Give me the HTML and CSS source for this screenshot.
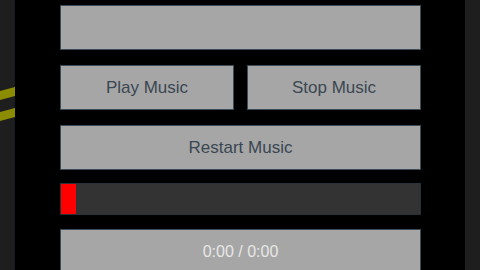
FILE: index.html
```html
<!DOCTYPE html>
<html>
  <head>
    <title>Music Player</title>
    <meta charset="UTF-8">
    <link rel="stylesheet" href="styles.css">
  </head>
  <body>
    <div class="page">
      <div class="side side-left">
        <svg width="15" height="270" viewBox="0 0 15 270">
          <polygon points="0,91 15,87 15,96 0,100" fill="#8c8c00"/>
          <polygon points="0,112 15,108 15,117 0,121" fill="#8c8c00"/>
        </svg>
      </div>
      <div class="player">
        <div class="box title-box"></div>
        <div class="row">
          <button class="box btn">Play Music</button>
          <button class="box btn">Stop Music</button>
        </div>
        <button class="box btn">Restart Music</button>
        <div class="progress">
          <div class="progress-fill" style="width: 15px"></div>
        </div>
        <div class="box time">0:00 / 0:00</div>
      </div>
      <div class="side side-right"></div>
    </div>
  </body>
</html>
```

FILE: styles.css
```css
/* Page layout */
body {
  margin: 0;
  background-color: #000;
  font-family: "Liberation Sans", Arial, sans-serif;
}

.page {
  display: flex;
  height: 270px;
  overflow: hidden;
}

.side {
  width: 15px;
  flex: none;
  background-color: #1e1e1e;
}

.side-left {
  border-right: 1px solid #161b20;
  box-sizing: border-box;
}

.side-left svg {
  display: block;
}

/* Player column */
.player {
  flex: 1;
  display: flex;
  flex-direction: column;
  padding: 5px 44px 0 45px;
}

.box {
  height: 45px;
  flex: none;
  box-sizing: border-box;
  border: 1px solid #3b4b57;
  background-color: #a6a6a6;
  margin-bottom: 15px;
}

.btn {
  display: block;
  width: 100%;
  padding: 0;
  font-family: "Liberation Sans", Arial, sans-serif;
  font-size: 17px;
  color: #3a4652;
  border-radius: 0;
}

.row {
  display: flex;
  gap: 13px;
}

.row .btn {
  flex: 1;
}

/* Progress bar */
.progress {
  height: 32px;
  flex: none;
  box-sizing: border-box;
  border: 1px solid #26323a;
  background-color: #333;
  margin: -2px 0 14px 0;
}

.progress-fill {
  height: 100%;
  background-color: #ff0000;
}

.time {
  display: flex;
  align-items: center;
  justify-content: center;
  font-size: 16px;
  color: #e6e6e6;
}
```
